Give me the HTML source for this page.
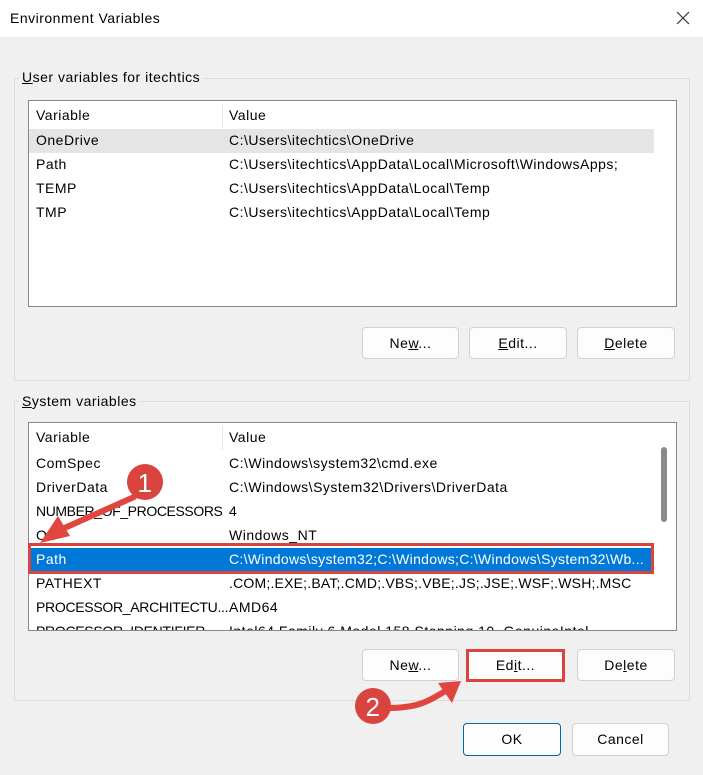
<!DOCTYPE html>
<html><head><style>
*{margin:0;padding:0;box-sizing:border-box}
body{width:703px;height:775px;background:#f0f0f0;font-family:"Liberation Sans",sans-serif;font-size:14px;letter-spacing:0.5px;color:#000;position:relative;overflow:hidden}
.abs{position:absolute}
.title{left:0;top:0;width:703px;height:37px;background:#fff}
.grp{border:1px solid #dcdcdc;border-radius:2px}
.lbl{background:#f0f0f0;padding:0 3px}
.list{background:#fff;border:1px solid #828790;overflow:hidden}
.row{position:absolute;left:0;height:24px;line-height:23px;white-space:nowrap}
.row span{position:absolute}
.btn{background:#fdfdfd;border:1px solid #d0d0d0;border-radius:4px;text-align:center;line-height:30px;font-size:14px}
</style></head><body>
<div class="abs title"></div>
<div class="abs" style="left:10px;top:10px;font-size:14px">Environment Variables</div>
<svg class="abs" style="left:676px;top:11px" width="14" height="14"><path d="M1 1L13 13M13 1L1 13" stroke="#333" stroke-width="1.2"/></svg>

<div class="abs grp" style="left:14px;top:78px;width:676px;height:303px"></div>
<div class="abs lbl" style="left:19px;top:69px;font-size:14px"><u>U</u>ser variables for itechtics</div>
<div class="abs list" style="left:28px;top:100px;width:649px;height:207px">
 <div class="abs" style="left:193px;top:3px;width:1px;height:24px;background:#e5e5e5"></div>
 <div class="row" style="top:3px;width:625px"><span style="left:7px">Variable</span><span style="left:200px">Value</span></div>
 <div class="row" style="top:28px;width:625px;background:#e5e5e5"><span style="left:7px">OneDrive</span><span style="left:200px">C:\Users\itechtics\OneDrive</span></div>
 <div class="row" style="top:52px"><span style="left:7px">Path</span><span style="left:200px">C:\Users\itechtics\AppData\Local\Microsoft\WindowsApps;</span></div>
 <div class="row" style="top:76px"><span style="left:7px">TEMP</span><span style="left:200px">C:\Users\itechtics\AppData\Local\Temp</span></div>
 <div class="row" style="top:100px"><span style="left:7px">TMP</span><span style="left:200px">C:\Users\itechtics\AppData\Local\Temp</span></div>
</div>
<div class="abs btn" style="left:362px;top:327px;width:97px;height:32px">Ne<u>w</u>...</div>
<div class="abs btn" style="left:469px;top:327px;width:98px;height:32px"><u>E</u>dit...</div>
<div class="abs btn" style="left:577px;top:327px;width:98px;height:32px"><u>D</u>elete</div>

<div class="abs grp" style="left:14px;top:401px;width:676px;height:300px"></div>
<div class="abs lbl" style="left:19px;top:393px;font-size:14px"><u>S</u>ystem variables</div>
<div class="abs list" style="left:28px;top:422px;width:649px;height:209px">
 <div class="abs" style="left:193px;top:3px;width:1px;height:24px;background:#e5e5e5"></div>
 <div class="row" style="top:3px"><span style="left:7px">Variable</span><span style="left:200px">Value</span></div>
 <div class="row" style="top:29px"><span style="left:7px">ComSpec</span><span style="left:200px">C:\Windows\system32\cmd.exe</span></div>
 <div class="row" style="top:53px"><span style="left:7px">DriverData</span><span style="left:200px">C:\Windows\System32\Drivers\DriverData</span></div>
 <div class="row" style="top:77px"><span style="left:7px;letter-spacing:-0.4px">NUMBER_OF_PROCESSORS</span><span style="left:200px">4</span></div>
 <div class="row" style="top:101px"><span style="left:7px">OS</span><span style="left:200px">Windows_NT</span></div>
 <div class="row" style="top:125px;width:625px;background:#0078d7;color:#fff"><span style="left:7px">Path</span><span style="left:200px;letter-spacing:0.3px">C:\Windows\system32;C:\Windows;C:\Windows\System32\Wb...</span></div>
 <div class="row" style="top:149px"><span style="left:7px">PATHEXT</span><span style="left:200px;letter-spacing:0.2px">.COM;.EXE;.BAT;.CMD;.VBS;.VBE;.JS;.JSE;.WSF;.WSH;.MSC</span></div>
 <div class="row" style="top:173px"><span style="left:7px;letter-spacing:-0.3px">PROCESSOR_ARCHITECTU...</span><span style="left:200px">AMD64</span></div>
 <div class="row" style="top:197px"><span style="left:7px;letter-spacing:-0.3px">PROCESSOR_IDENTIFIER</span><span style="left:200px">Intel64 Family 6 Model 158 Stepping 10, GenuineIntel</span></div>
 <div class="abs" style="left:632px;top:24px;width:6px;height:75px;background:#8a8a8a;border-radius:3px"></div>
</div>
<div class="abs" style="left:28px;top:543px;width:626px;height:31px;border:3px solid #d9443f"></div>
<div class="abs btn" style="left:362px;top:649px;width:97px;height:32px">Ne<u>w</u>...</div>
<div class="abs btn" style="left:466px;top:649px;width:99px;height:33px;border:3px solid #d9443f;border-radius:0;line-height:27px">Ed<u>i</u>t...</div>
<div class="abs btn" style="left:577px;top:649px;width:98px;height:32px">De<u>l</u>ete</div>
<div class="abs btn" style="left:463px;top:723px;width:98px;height:33px;border-color:#0067c0">OK</div>
<div class="abs btn" style="left:572px;top:723px;width:97px;height:33px">Cancel</div>

<svg class="abs" style="left:0;top:0" width="703" height="775">
 <path d="M134 497 L60 530" stroke="#e0463f" stroke-width="6" stroke-linecap="round"/>
 <path d="M40 543 L58 516 L70 536 Z" fill="#e0463f"/>
 <circle cx="145" cy="482" r="18" fill="#d9443f"/>
 <text x="145" y="492" font-family="Liberation Sans" font-size="26" fill="#fff" text-anchor="middle">1</text>
 <path d="M388 708 C420 708 430 700 447 690" stroke="#e0463f" stroke-width="6" fill="none" stroke-linecap="round"/>
 <path d="M461 681 L438 683 L452 703 Z" fill="#e0463f"/>
 <circle cx="373" cy="706" r="18" fill="#d9443f"/>
 <text x="373" y="716" font-family="Liberation Sans" font-size="26" fill="#fff" text-anchor="middle">2</text>
</svg>
</body></html>
